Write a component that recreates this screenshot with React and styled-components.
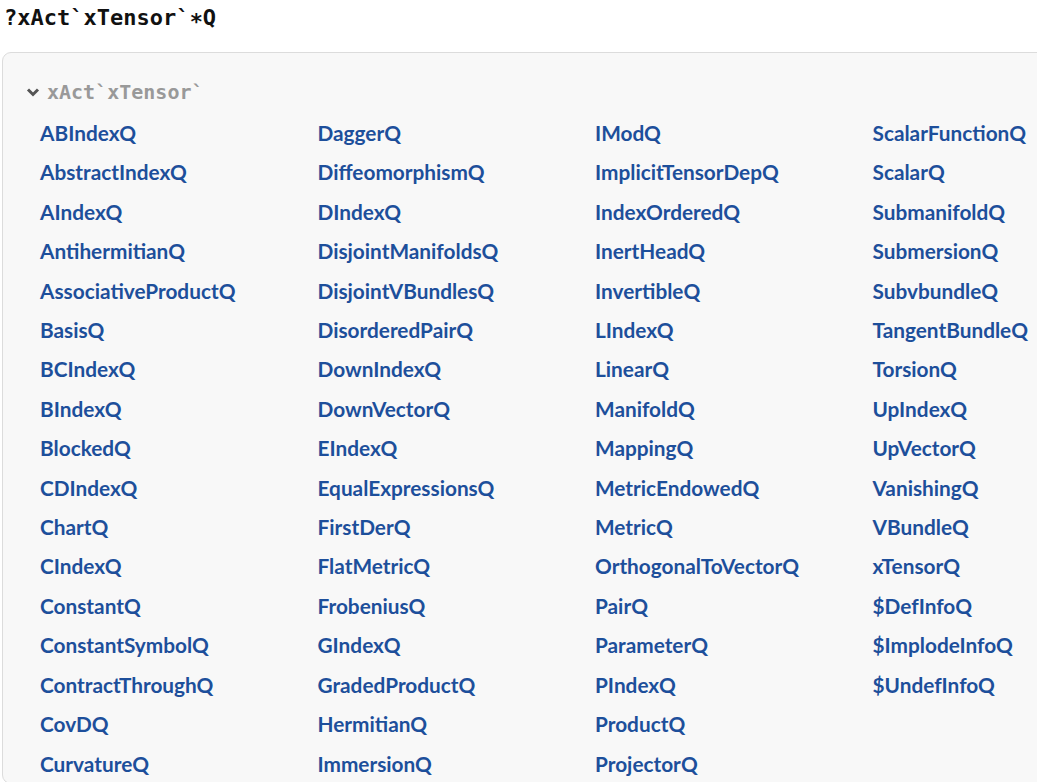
import React from 'react'
import styled, { createGlobalStyle } from 'styled-components';

const Global = createGlobalStyle`
  html, body {
    margin: 0;
    padding: 0;
    background: #ffffff;
    overflow: hidden;
  }
`

const Page = styled.div`
  padding: 5px 0 0 2px;
  width: 1037px;
  height: 782px;
  overflow: hidden;
  box-sizing: border-box;
`

const Query = styled.div`
  font-family: "DejaVu Sans Mono", "Liberation Mono", monospace;
  font-weight: bold;
  font-size: 22px;
  line-height: 26px;
  color: #111;
  padding-left: 2px;
`

const Panel = styled.div`
  margin-top: 21px;
  width: 1060px;
  background: #f8f8f8;
  border: 1px solid #dcdcdc;
  border-radius: 9px;
  padding: 26px 0 0 37px;
`

const Context = styled.div`
  display: flex;
  align-items: center;
  gap: 7px;
  margin-left: -14px;
  height: 26px;
  font-family: "DejaVu Sans Mono", "Liberation Mono", monospace;
  font-weight: bold;
  font-size: 20px;
  color: #999999;
`

const Columns = styled.div`
  display: grid;
  grid-template-columns: repeat(4, 277.5px);
  margin-top: 8px;
`

const Column = styled.div`
  display: flex;
  flex-direction: column;
`

const Name = styled.a`
  font-family: Lato, "Noto Sans", sans-serif;
  font-weight: 700;
  font-size: 20.8px;
  line-height: 39.4px;
  color: #1d4f9b;
  text-decoration: none;
  white-space: nowrap;
`

const columns = [
  ['ABIndexQ', 'AbstractIndexQ', 'AIndexQ', 'AntihermitianQ', 'AssociativeProductQ', 'BasisQ', 'BCIndexQ', 'BIndexQ', 'BlockedQ', 'CDIndexQ', 'ChartQ', 'CIndexQ', 'ConstantQ', 'ConstantSymbolQ', 'ContractThroughQ', 'CovDQ', 'CurvatureQ'],
  ['DaggerQ', 'DiffeomorphismQ', 'DIndexQ', 'DisjointManifoldsQ', 'DisjointVBundlesQ', 'DisorderedPairQ', 'DownIndexQ', 'DownVectorQ', 'EIndexQ', 'EqualExpressionsQ', 'FirstDerQ', 'FlatMetricQ', 'FrobeniusQ', 'GIndexQ', 'GradedProductQ', 'HermitianQ', 'ImmersionQ'],
  ['IModQ', 'ImplicitTensorDepQ', 'IndexOrderedQ', 'InertHeadQ', 'InvertibleQ', 'LIndexQ', 'LinearQ', 'ManifoldQ', 'MappingQ', 'MetricEndowedQ', 'MetricQ', 'OrthogonalToVectorQ', 'PairQ', 'ParameterQ', 'PIndexQ', 'ProductQ', 'ProjectorQ'],
  ['ScalarFunctionQ', 'ScalarQ', 'SubmanifoldQ', 'SubmersionQ', 'SubvbundleQ', 'TangentBundleQ', 'TorsionQ', 'UpIndexQ', 'UpVectorQ', 'VanishingQ', 'VBundleQ', 'xTensorQ', '$DefInfoQ', '$ImplodeInfoQ', '$UndefInfoQ'],
]

export default function App() {
  return (
    <>
      <Global />
      <Page>
        <Query>?xAct`xTensor`∗Q</Query>
        <Panel>
          <Context>
            <svg width="14" height="10" viewBox="0 0 14 10">
              <polyline points="2,2.5 7,7.5 12,2.5" fill="none" stroke="#555" strokeWidth="3" />
            </svg>
            xAct`xTensor`
          </Context>
          <Columns>
            {columns.map((col, i) => (
              <Column key={i}>
                {col.map(n => <Name key={n}>{n}</Name>)}
              </Column>
            ))}
          </Columns>
        </Panel>
      </Page>
    </>
  )
}
